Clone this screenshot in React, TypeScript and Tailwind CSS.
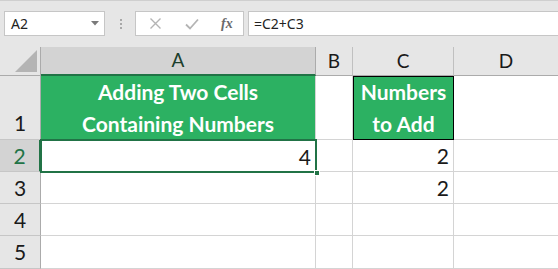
import React from "react";

const gridLine = "border-r border-b border-[#d4d4d4]";

const XIcon = () => (
  <svg width="13" height="13" viewBox="0 0 13 13" className="block">
    <path d="M1.5 1.5 L11.5 11.5 M11.5 1.5 L1.5 11.5" stroke="#b4b4b4" strokeWidth="1.4" fill="none" />
  </svg>
);

const CheckIcon = () => (
  <svg width="14" height="12" viewBox="0 0 14 12" className="block">
    <path d="M1 6.5 L5 10.5 L13 1.5" stroke="#b4b4b4" strokeWidth="1.8" fill="none" />
  </svg>
);

const App = () => {
  return (
    <div className="w-[558px] h-[269px] overflow-hidden bg-white font-['Lato',sans-serif]">
      {/* formula bar */}
      <div className="flex h-[47px] items-start border-t border-[#cfcfcf] bg-[#e6e6e6] pt-[10px] font-['Noto_Sans',sans-serif]">
        <div className="ml-[4px] flex h-[25px] w-[101px] items-center justify-between border border-[#c6c6c6] bg-white pl-[6px] pr-[5px]">
          <span className="text-[14px] leading-none text-[#222]">A2</span>
          <svg width="8" height="5" viewBox="0 0 8 5" className="block">
            <path d="M0 0 L8 0 L4 4.5 Z" fill="#7a7a7a" />
          </svg>
        </div>
        <div className="ml-[15px] mt-[8px] flex flex-col gap-[2px]">
          <span className="h-[2px] w-[2px] bg-[#a8a8a8]" />
          <span className="h-[2px] w-[2px] bg-[#a8a8a8]" />
          <span className="h-[2px] w-[2px] bg-[#a8a8a8]" />
        </div>
        <div className="ml-[13px] flex h-[25px] w-[109px] items-center border border-[#c6c6c6] bg-white pl-[13px]">
          <XIcon />
          <span className="ml-[23px]">
            <CheckIcon />
          </span>
          <span className="ml-[22px] font-['Liberation_Serif',serif] text-[14px] font-bold italic leading-none text-[#6a6a6a]">
            fx
          </span>
        </div>
        <div className="ml-[4px] flex h-[25px] flex-1 items-center border-y border-l border-[#c6c6c6] bg-white pl-[5px]">
          <span className="text-[14px] leading-none text-[#222]">=C2+C3</span>
        </div>
      </div>

      {/* sheet */}
      <div className="grid grid-cols-[41px_275px_37px_101px_1fr] grid-rows-[29px_64px_32px_32px_32px_33px] text-[#1a1a1a]">
        {/* header row */}
        <div className="relative border-r border-b border-[#ababab] bg-[#e6e6e6]">
          <svg width="22" height="22" viewBox="0 0 22 22" className="absolute right-[3px] bottom-[3px]">
            <path d="M22 0 L22 22 L0 22 Z" fill="#b4b4b4" />
          </svg>
        </div>
        <div className="flex items-center justify-center border-r border-b-2 border-r-[#ababab] border-b-[#217346] bg-[#d3d3d3] text-[19px] text-[#1c3f2c]">
          A
        </div>
        <div className="flex items-center justify-center border-r border-b border-r-[#c0c0c0] border-b-[#ababab] bg-[#e6e6e6] text-[19px]">
          B
        </div>
        <div className="flex items-center justify-center border-r border-b border-r-[#c0c0c0] border-b-[#ababab] bg-[#e6e6e6] text-[19px]">
          C
        </div>
        <div className="flex items-center justify-center border-b border-[#ababab] bg-[#e6e6e6] text-[19px]">
          D
        </div>

        {/* row 1 */}
        <div className="flex items-end justify-center border-r border-b border-r-[#ababab] border-b-[#c6c6c6] bg-[#e6e6e6] pb-[6px] text-[21px] leading-none">
          1
        </div>
        <div className="flex flex-col items-center justify-center border-r border-[#d4d4d4] bg-[#2cb162] text-[21px] font-bold leading-[32px] text-white">
          <span>Adding Two Cells</span>
          <span>Containing Numbers</span>
        </div>
        <div className={gridLine} />
        <div className="flex flex-col items-center justify-center border border-black bg-[#2cb162] text-[21px] font-bold leading-[32px] text-white">
          <span>Numbers</span>
          <span>to Add</span>
        </div>
        <div className="border-b border-[#d4d4d4]" />

        {/* row 2 */}
        <div className="flex items-center justify-center border-r-2 border-b border-r-[#217346] border-b-[#c6c6c6] bg-[#d3d3d3] text-[21px] text-[#217346]">
          2
        </div>
        <div className="relative flex items-end justify-end pb-[3px] pr-[5px] text-[21px] leading-none">
          <div className="absolute -top-px -left-px right-[-1px] -bottom-px border-2 border-[#217346]" />
          <div className="absolute -right-[4px] -bottom-[4px] h-[6px] w-[6px] border border-white bg-[#217346]" />
          <span className="mb-[2px]">4</span>
        </div>
        <div className={gridLine} />
        <div className={`flex items-end justify-end pb-[5px] pr-[4px] text-[21px] leading-none ${gridLine}`}>2</div>
        <div className="border-b border-[#d4d4d4]" />

        {/* row 3 */}
        <div className="flex items-center justify-center border-r border-b border-r-[#ababab] border-b-[#c6c6c6] bg-[#e6e6e6] text-[21px]">
          3
        </div>
        <div className={gridLine} />
        <div className={gridLine} />
        <div className={`flex items-end justify-end pb-[5px] pr-[4px] text-[21px] leading-none ${gridLine}`}>2</div>
        <div className="border-b border-[#d4d4d4]" />

        {/* row 4 */}
        <div className="flex items-center justify-center border-r border-b border-r-[#ababab] border-b-[#c6c6c6] bg-[#e6e6e6] text-[21px]">
          4
        </div>
        <div className={gridLine} />
        <div className={gridLine} />
        <div className={gridLine} />
        <div className="border-b border-[#d4d4d4]" />

        {/* row 5 */}
        <div className="flex items-center justify-center border-r border-b border-r-[#ababab] border-b-[#c6c6c6] bg-[#e6e6e6] text-[21px]">
          5
        </div>
        <div className={gridLine} />
        <div className={gridLine} />
        <div className={gridLine} />
        <div className="border-b border-[#d4d4d4]" />
      </div>
    </div>
  );
};

export default App;
